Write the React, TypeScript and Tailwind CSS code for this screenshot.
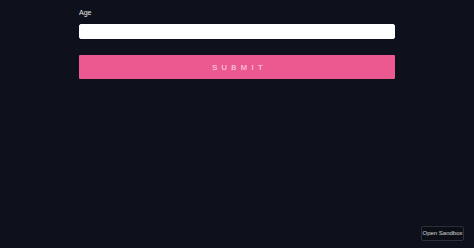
export default function App() {
  return (
    <div className="relative h-[248px] w-[474px] overflow-hidden bg-[#0e101c] font-['Liberation_Sans',Arial,sans-serif]">
      <form className="ml-[79px] w-[316px] pt-[9px]" onSubmit={(e) => e.preventDefault()}>
        <label className="block h-[15px] text-[7px] leading-[8px] text-white/90">Age</label>
        <input className="block h-[15px] w-full rounded-[2px] border border-white bg-white outline-none" />
        <button
          type="submit"
          className="mt-[16px] block h-[24px] w-full rounded-[1px] bg-[#ec5990] pl-[5px] pt-[1px] text-[7.5px] font-light uppercase tracking-[4.4px] text-white/80"
        >
          Submit
        </button>
      </form>
      <div className="absolute left-[421px] top-[226px] flex h-[15px] w-[43px] items-center justify-center rounded-[2px] border border-[#2c2f3a] bg-[#0c0e16] text-[6px] text-white/80">
        Open Sandbox
      </div>
    </div>
  );
}
